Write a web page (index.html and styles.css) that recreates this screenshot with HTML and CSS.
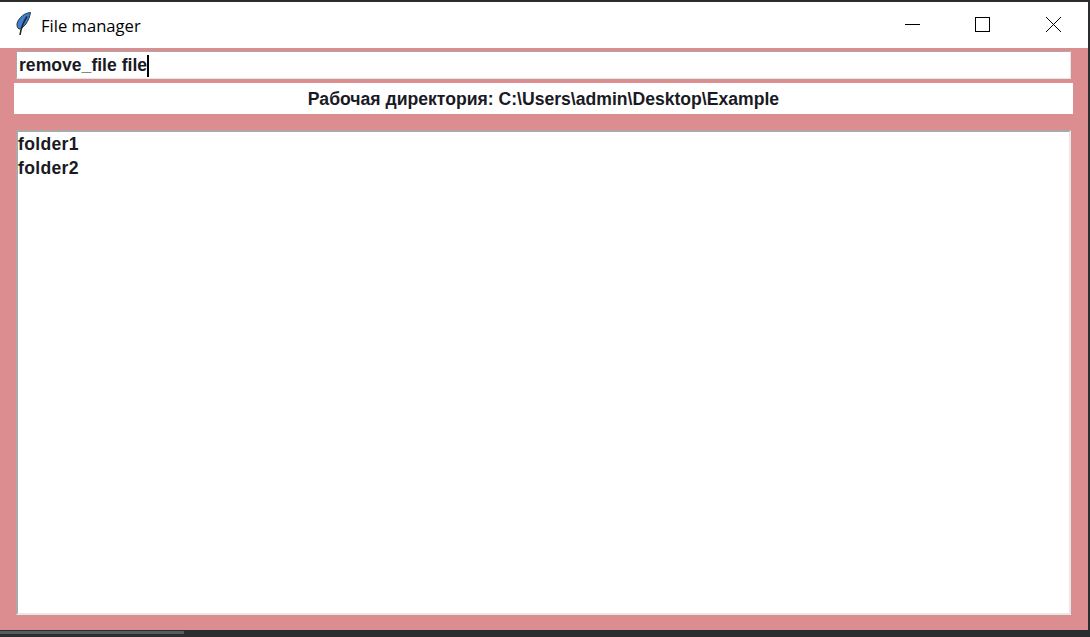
FILE: index.html
```html
<!DOCTYPE html>
<html lang="en">
<head>
    <meta charset="UTF-8">
    <title>File manager</title>
    <link rel="stylesheet" href="styles.css">
</head>
<body>

    <div class="window">
        <div class="titlebar">
            <svg class="titlebar__icon" width="16" height="24" viewBox="0 0 16 24">
                <path d="M14.5 0.5 C8.5 1 3 5.5 1.2 11 C0.6 13.5 1.2 15.8 3 17 C7.5 16.5 13 9.5 14.5 0.5 Z" fill="#3f7fd0" stroke="#2b3444" stroke-width="1"/>
                <path d="M11 4.5 C8 9 5.5 13.5 4 23" fill="none" stroke="#20242c" stroke-width="1.5"/>
            </svg>
            <div class="titlebar__text">File manager</div>
            <div class="titlebar__buttons">
                <svg class="titlebar__button" width="70" height="46" viewBox="0 0 70 46">
                    <path d="M35 22.5 H50" fill="none" stroke="#000" stroke-width="1"/>
                </svg>
                <svg class="titlebar__button" width="70" height="46" viewBox="0 0 70 46">
                    <rect x="35.5" y="15.5" width="14" height="14" fill="none" stroke="#000" stroke-width="1"/>
                </svg>
                <svg class="titlebar__button" width="70" height="46" viewBox="0 0 70 46">
                    <path d="M36 15 L51 30 M51 15 L36 30" fill="none" stroke="#000" stroke-width="1"/>
                </svg>
            </div>
        </div>

        <div class="content">
            <div class="command">remove_file file<span class="caret"></span></div>
            <div class="workdir">Рабочая директория: C:\Users\admin\Desktop\Example</div>
            <div class="files">
                <div class="files__item">folder1</div>
                <div class="files__item">folder2</div>
            </div>
        </div>
    </div>

    <div class="taskbar">
        <div class="taskbar__thumb"></div>
    </div>

</body>
</html>
```

FILE: styles.css
```css
html, body {
    height: 100%;
}

body {
    display: flex;
    flex-direction: column;
    width: 1090px;
    height: 637px;
    margin: 0;
    overflow: hidden;
    box-sizing: border-box;
    padding-top: 2px;
    background-color: #2b2e2e;
    font-family: "Liberation Sans", Arial, sans-serif;
    color: #1a1a24;
}

.window {
    display: flex;
    flex-direction: column;
    width: 1088px;
    height: 628px;
}

.titlebar {
    display: flex;
    align-items: center;
    height: 46px;
    flex-shrink: 0;
    background-color: #fff;
}

.titlebar__icon {
    margin-left: 16px;
    margin-top: -2px;
}

.titlebar__text {
    margin-left: 9px;
    font-family: "Open Sans", "Noto Sans", sans-serif;
    font-size: 16.6px;
    color: #000;
}

.titlebar__buttons {
    display: flex;
    margin-left: auto;
    margin-right: 8px;
}

.titlebar__button {
    display: block;
}

.content {
    flex: 1;
    display: flex;
    flex-direction: column;
    box-sizing: border-box;
    padding: 3px 15px 15px 14px;
    background-color: #dc8d8f;
    font-size: 17.6px;
    font-weight: bold;
}

.command {
    display: flex;
    align-items: center;
    height: 28px;
    margin: 0 2px;
    box-sizing: border-box;
    padding-left: 2px;
    padding-top: 1px;
    background-color: #fff;
    border: 1px solid;
    border-color: #a9a9a9 #e4e4e4 #e4e4e4 #a9a9a9;
}

.caret {
    width: 2px;
    height: 22px;
    background-color: #000;
}

.workdir {
    display: flex;
    align-items: center;
    justify-content: center;
    height: 31px;
    margin-top: 4px;
    padding-top: 2px;
    box-sizing: border-box;
    background-color: #fff;
}

.files {
    flex: 1;
    margin: 16px 2px 0;
    box-sizing: border-box;
    padding: 0;
    background-color: #fff;
    border: 2px solid;
    border-color: #a9a9a9 #e8e8e8 #e8e8e8 #a9a9a9;
}

.files__item {
    height: 24px;
    line-height: 24px;
    letter-spacing: 0.3px;
}

.taskbar {
    flex: 1;
    margin-top: 1px;
}

.taskbar__thumb {
    width: 184px;
    height: 3px;
    background-color: #555c5e;
}
```
